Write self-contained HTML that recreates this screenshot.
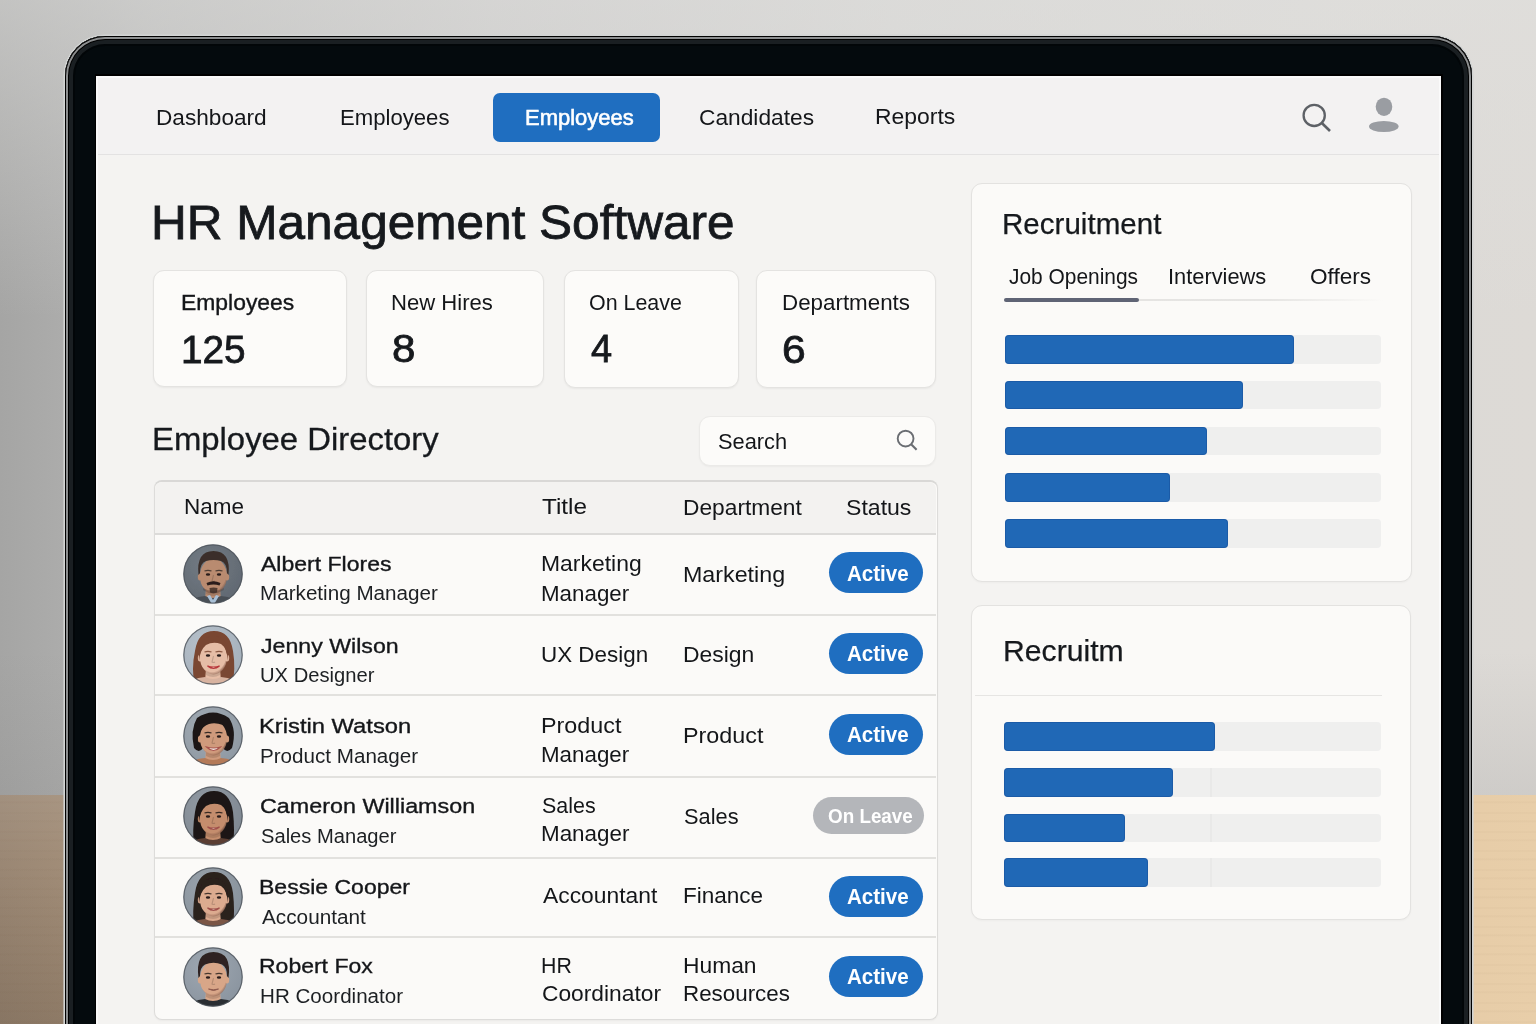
<!DOCTYPE html>
<html><head><meta charset="utf-8">
<style>
*{box-sizing:border-box;margin:0;padding:0}
html,body{width:1536px;height:1024px;overflow:hidden;background:#d0d0ce}
body{position:relative;font-family:"Liberation Sans",sans-serif;color:#1a1d21}
.r{position:absolute}
.t{position:absolute;white-space:nowrap}
.av{position:absolute;width:60px;height:60px;line-height:0}
</style></head>
<body>
<div class="r" style="left:0.0px;top:0.0px;width:1536.0px;height:795.0px;background:linear-gradient(90deg,#a5a5a4 0%,#b6b6b5 10%,#c9c8c7 32%,#d5d4d2 58%,#dbd9d6 85%,#dddad6 100%)"></div>
<div class="r" style="left:0.0px;top:0.0px;width:1536.0px;height:795.0px;background:linear-gradient(180deg,rgba(225,225,223,.5) 0%,rgba(210,210,210,0) 40%,rgba(150,150,150,0) 82%,rgba(110,110,110,.13) 100%)"></div>
<div class="r" style="left:0.0px;top:795.0px;width:1536.0px;height:229.0px;background:linear-gradient(90deg,#9a8774 0%,#a48f79 6%,#bea78b 25%,#d6bd99 55%,#e4c9a5 85%,#e8cea9 100%)"></div>
<div class="r" style="left:0.0px;top:795.0px;width:66.0px;height:229.0px;background:linear-gradient(180deg,rgba(255,255,255,.08) 0%,rgba(0,0,0,0) 30%,rgba(40,25,10,.16) 100%)"></div>
<div class="r" style="left:0;top:795px;width:1536px;height:229px;background:repeating-linear-gradient(180deg,rgba(255,255,255,0) 0px,rgba(255,255,255,0) 6px,rgba(90,60,30,.035) 7px,rgba(255,255,255,0) 9px,rgba(255,255,255,0) 17px,rgba(90,60,30,.045) 18px,rgba(255,255,255,0) 19px)"></div>
<div class="r" style="left:65.0px;top:35.5px;width:1406.5px;height:1088.5px;border-radius:40px;background:#040a0d;box-shadow:0 0 0 1.6px #d2d4d3, inset 0 0 0 1px #000, inset 0 0 0 3px #8c8e8f, inset 0 0 0 4px #000, inset 0 0 0 8px #1a1f22, inset 0 0 0 10px #020608"></div>
<div class="r" style="left:94.5px;top:74.0px;width:1348.0px;height:950.0px;background:#000"></div>
<div class="r" style="left:96.0px;top:75.5px;width:1345.0px;height:948.5px;background:#f4f3f1"></div>
<div class="r" style="left:98.0px;top:77.5px;width:1341.0px;height:77.3px;background:#f3f2f2;border-bottom:1.5px solid #e3e2e2"></div>
<div class="t" style="left:155.83px;top:106.93px;font-size:22.06px;line-height:22.06px;color:#141619;transform:scaleX(1.0262);transform-origin:0 0;">Dashboard</div>
<div class="t" style="left:339.67px;top:106.93px;font-size:22.06px;line-height:22.06px;color:#141619;transform:scaleX(1.0036);transform-origin:0 0;">Employees</div>
<div class="t" style="left:698.63px;top:106.83px;font-size:22.06px;line-height:22.06px;color:#141619;transform:scaleX(1.0311);transform-origin:0 0;">Candidates</div>
<div class="t" style="left:874.91px;top:106.48px;font-size:22.47px;line-height:22.47px;color:#141619;transform:scaleX(1.0207);transform-origin:0 0;">Reports</div>
<div class="r" style="left:493.0px;top:93.0px;width:167.0px;height:49.0px;background:#1f6ec0;border-radius:7px"></div>
<div class="t" style="left:524.83px;top:106.88px;font-size:22.47px;line-height:22.47px;color:#ffffff;transform:scaleX(0.9790);transform-origin:0 0;-webkit-text-stroke:0.6px #ffffff;">Employees</div>
<svg class="r" style="left:1290px;top:95px" width="50" height="45" viewBox="1290 95 50 45">
<circle cx="1314.2" cy="115.4" r="10.6" fill="none" stroke="#5d6166" stroke-width="2.3"/>
<line x1="1321.8" y1="123" x2="1330" y2="131" stroke="#5d6166" stroke-width="2.6" stroke-linecap="butt"/>
</svg>
<svg class="r" style="left:1360px;top:90px" width="50" height="50" viewBox="1360 90 50 50">
<ellipse cx="1384" cy="106.8" rx="8.3" ry="9.1" fill="#9a9da2"/>
<ellipse cx="1383.8" cy="126.5" rx="14.8" ry="5.6" fill="#9a9da2"/>
</svg>
<div class="t" style="left:151.13px;top:197.63px;font-size:48.64px;line-height:48.64px;color:#16191d;transform:scaleX(1.0184);transform-origin:0 0;-webkit-text-stroke:0.8px #16191d;">HR Management Software</div>
<div class="r" style="left:153.0px;top:269.6px;width:194.0px;height:117.0px;background:#fcfbf9;border:1.5px solid #e4e3e1;border-radius:11px;box-shadow:0 1px 2px rgba(0,0,0,.05)"></div>
<div class="r" style="left:365.6px;top:269.6px;width:178.4px;height:117.0px;background:#fcfbf9;border:1.5px solid #e4e3e1;border-radius:11px;box-shadow:0 1px 2px rgba(0,0,0,.05)"></div>
<div class="r" style="left:564.3px;top:270.0px;width:175.0px;height:118.0px;background:#fcfbf9;border:1.5px solid #e4e3e1;border-radius:11px;box-shadow:0 1px 2px rgba(0,0,0,.05)"></div>
<div class="r" style="left:756.0px;top:270.0px;width:180.0px;height:118.0px;background:#fcfbf9;border:1.5px solid #e4e3e1;border-radius:11px;box-shadow:0 1px 2px rgba(0,0,0,.05)"></div>
<div class="t" style="left:181.30px;top:292.36px;font-size:21.90px;line-height:21.90px;color:#141619;transform:scaleX(1.0460);transform-origin:0 0;-webkit-text-stroke:0.35px #141619;">Employees</div>
<div class="t" style="left:390.77px;top:293.24px;font-size:21.33px;line-height:21.33px;color:#141619;transform:scaleX(1.0359);transform-origin:0 0;">New Hires</div>
<div class="t" style="left:589.00px;top:293.24px;font-size:21.33px;line-height:21.33px;color:#141619;transform:scaleX(1.0039);transform-origin:0 0;">On Leave</div>
<div class="t" style="left:782.25px;top:292.72px;font-size:21.48px;line-height:21.48px;color:#141619;transform:scaleX(1.0415);transform-origin:0 0;">Departments</div>
<div class="t" style="left:181.28px;top:330.09px;font-size:39.11px;line-height:39.11px;color:#16191d;transform:scaleX(0.9898);transform-origin:0 0;-webkit-text-stroke:0.8px #16191d;">125</div>
<div class="t" style="left:391.88px;top:330.21px;font-size:38.97px;line-height:38.97px;color:#16191d;transform:scaleX(1.0808);transform-origin:0 0;-webkit-text-stroke:0.8px #16191d;">8</div>
<div class="t" style="left:590.61px;top:330.33px;font-size:38.83px;line-height:38.83px;color:#16191d;transform:scaleX(0.9790);transform-origin:0 0;-webkit-text-stroke:0.8px #16191d;">4</div>
<div class="t" style="left:782.20px;top:330.03px;font-size:39.54px;line-height:39.54px;color:#16191d;transform:scaleX(1.0791);transform-origin:0 0;-webkit-text-stroke:0.8px #16191d;">6</div>
<div class="t" style="left:151.51px;top:423.85px;font-size:31.72px;line-height:31.72px;color:#16191d;transform:scaleX(1.0361);transform-origin:0 0;-webkit-text-stroke:0.3px #16191d;">Employee Directory</div>
<div class="r" style="left:698.5px;top:415.5px;width:237.3px;height:50.1px;background:#fcfbf9;border:1.5px solid #ebeae8;border-radius:11px;box-shadow:0 1px 2px rgba(0,0,0,.04)"></div>
<div class="t" style="left:718.32px;top:430.76px;font-size:21.90px;line-height:21.90px;color:#141619;transform:scaleX(0.9973);transform-origin:0 0;">Search</div>
<svg class="r" style="left:890px;top:425px" width="35" height="35" viewBox="890 425 35 35">
<circle cx="905.6" cy="438.6" r="7.9" fill="none" stroke="#6a6d72" stroke-width="1.9"/>
<line x1="911.4" y1="444.4" x2="916.6" y2="449.8" stroke="#6a6d72" stroke-width="2.1"/>
</svg>
<div class="r" style="left:153.5px;top:479.5px;width:784.0px;height:540.0px;background:#fbfaf8;border:1.5px solid #dddcda;border-top:2px solid #d9d8d6;border-radius:8px;box-shadow:0 1px 2px rgba(0,0,0,.04)"></div>
<div class="r" style="left:155.0px;top:481.5px;width:781.0px;height:51.5px;background:#f3f2f0;border-radius:7px 7px 0 0"></div>
<div class="r" style="left:155.0px;top:533.0px;width:781.0px;height:2.0px;background:#dcdbd9"></div>
<div class="r" style="left:155.0px;top:614.0px;width:781.0px;height:2.0px;background:#e2e1de"></div>
<div class="r" style="left:155.0px;top:694.0px;width:781.0px;height:2.0px;background:#e2e1de"></div>
<div class="r" style="left:155.0px;top:776.0px;width:781.0px;height:2.0px;background:#e2e1de"></div>
<div class="r" style="left:155.0px;top:857.0px;width:781.0px;height:2.0px;background:#e2e1de"></div>
<div class="r" style="left:155.0px;top:936.0px;width:781.0px;height:2.0px;background:#e2e1de"></div>
<div class="t" style="left:184.24px;top:496.42px;font-size:22.54px;line-height:22.54px;color:#141619;transform:scaleX(0.9990);transform-origin:0 0;">Name</div>
<div class="t" style="left:541.92px;top:496.42px;font-size:22.54px;line-height:22.54px;color:#141619;transform:scaleX(1.0795);transform-origin:0 0;">Title</div>
<div class="t" style="left:683.02px;top:496.76px;font-size:21.90px;line-height:21.90px;color:#141619;transform:scaleX(1.0391);transform-origin:0 0;">Department</div>
<div class="t" style="left:845.98px;top:496.76px;font-size:21.90px;line-height:21.90px;color:#141619;transform:scaleX(1.0540);transform-origin:0 0;">Status</div>
<div class="av" style="left:182.5px;top:544.3px"><svg width="60" height="60" viewBox="0 0 60 60"><defs><clipPath id="c0"><circle cx="30" cy="30" r="29.6"/></clipPath><radialGradient id="bg0" cx="40%" cy="35%" r="70%"><stop offset="0" stop-color="#737b84"/><stop offset="1" stop-color="#5f6770"/></radialGradient><radialGradient id="f0" cx="45%" cy="40%" r="65%"><stop offset="0" stop-color="#b98b70"/><stop offset=".8" stop-color="#b98b70"/><stop offset="1" stop-color="#7a5040" stop-opacity=".6"/></radialGradient><filter id="b0"><feGaussianBlur stdDeviation="0.5"/></filter></defs><g clip-path="url(#c0)"><g filter="url(#b0)"><rect x="-2" y="-2" width="64" height="64" fill="url(#bg0)"/><path d="M23 44 L37 44 L38 56 L22 56Z" fill="#b98b70"/><path d="M23 46 Q30 52 37 46 L37 50 Q30 54 23 50Z" fill="#000" opacity=".12"/><path d="M2 64 Q6 53 22 52 Q30 56 38 52 Q54 53 58 64Z" fill="#4a4f56"/><path d="M24 52 L30 62 L36 52 L33 51 L30 56 L27 51Z" fill="#a9c0d6"/><ellipse cx="30.5" cy="32" rx="13.6" ry="17.5" fill="url(#f0)"/><ellipse cx="17" cy="33" rx="2.2" ry="3.6" fill="#b98b70"/><ellipse cx="44" cy="33" rx="2.2" ry="3.6" fill="#b98b70"/><path d="M15.5 31 Q13 7 30.5 7 Q48 7 45.5 31 L44 29 Q44 19 38 17 Q30.5 15 23 17 Q17 19 17 29Z" fill="#3b2f29"/><path d="M23.5 39 Q30.5 35.5 37.5 39 L36.5 41.5 Q30.5 39.5 24.5 41.5Z" fill="#2a1f1a"/><path d="M26.5 44 Q30.5 43 34.5 44 L34 48.5 Q30.5 50 27 48.5Z" fill="#3a2b24" opacity=".8"/><path d="M20 46 Q30 53 41 46 L41 44 Q30 50 20 44Z" fill="#3a2b24" opacity=".25"/><ellipse cx="25" cy="30.5" rx="2.2" ry="1.2" fill="#2a1f1b"/><ellipse cx="36" cy="30.5" rx="2.2" ry="1.2" fill="#2a1f1b"/><path d="M21.5 27 Q25 25.6 28.5 27 M32.5 27 Q36 25.6 39.5 27" stroke="#3b2f29" stroke-width="1.2" fill="none" opacity=".85"/><path d="M30.5 31 L29 37 Q30.5 38 32 37" stroke="#000" stroke-opacity=".16" stroke-width="1.1" fill="none"/></g></g><circle cx="30" cy="30" r="29.2" fill="none" stroke="#4e545b" stroke-width="1.2" stroke-opacity=".8"/></svg></div>
<div class="t" style="left:261.19px;top:553.90px;font-size:20.91px;line-height:20.91px;color:#141619;transform:scaleX(1.1007);transform-origin:0 0;-webkit-text-stroke:0.35px #141619;">Albert Flores</div>
<div class="t" style="left:259.89px;top:583.63px;font-size:19.34px;line-height:19.34px;color:#1d2023;transform:scaleX(1.0683);transform-origin:0 0;">Marketing Manager</div>
<div class="t" style="left:540.81px;top:553.38px;font-size:21.76px;line-height:21.76px;color:#141619;transform:scaleX(1.0538);transform-origin:0 0;">Marketing</div>
<div class="t" style="left:540.85px;top:582.68px;font-size:21.76px;line-height:21.76px;color:#141619;transform:scaleX(1.0276);transform-origin:0 0;">Manager</div>
<div class="t" style="left:682.58px;top:564.18px;font-size:21.76px;line-height:21.76px;color:#141619;transform:scaleX(1.0689);transform-origin:0 0;">Marketing</div>
<div class="r" style="left:829.2px;top:552.4px;width:94.0px;height:40.6px;background:#1f6ec0;border-radius:21px"></div>
<div class="t" style="left:846.58px;top:562.68px;font-size:22.47px;line-height:22.47px;color:#ffffff;transform:scaleX(0.9145);transform-origin:0 0;font-weight:700;">Active</div>
<div class="av" style="left:182.5px;top:625.0px"><svg width="60" height="60" viewBox="0 0 60 60"><defs><clipPath id="c1"><circle cx="30" cy="30" r="29.6"/></clipPath><radialGradient id="bg1" cx="40%" cy="35%" r="70%"><stop offset="0" stop-color="#b8c2cc"/><stop offset="1" stop-color="#a3aeb9"/></radialGradient><radialGradient id="f1" cx="45%" cy="40%" r="65%"><stop offset="0" stop-color="#e6bda6"/><stop offset=".8" stop-color="#e6bda6"/><stop offset="1" stop-color="#7a5040" stop-opacity=".6"/></radialGradient><filter id="b1"><feGaussianBlur stdDeviation="0.5"/></filter></defs><g clip-path="url(#c1)"><g filter="url(#b1)"><rect x="-2" y="-2" width="64" height="64" fill="url(#bg1)"/><path d="M12 62 Q8 44 12 26 Q15 6 31 6 Q47 6 50 26 Q53 44 49 62Z" fill="#7a4631"/><path d="M23 44 L37 44 L38 56 L22 56Z" fill="#e6bda6"/><path d="M23 46 Q30 52 37 46 L37 50 Q30 54 23 50Z" fill="#000" opacity=".12"/><path d="M2 64 Q6 53 22 52 Q30 56 38 52 Q54 53 58 64Z" fill="#d8b3a0"/><ellipse cx="30.5" cy="32" rx="13.6" ry="17.5" fill="url(#f1)"/><ellipse cx="17" cy="33" rx="2.2" ry="3.6" fill="#e6bda6"/><ellipse cx="44" cy="33" rx="2.2" ry="3.6" fill="#e6bda6"/><path d="M16 36 Q14 12 30.5 11 Q47 12 45 36 Q44 23 38 19 Q30 16 23 20 Q17 25 16 36Z" fill="#7a4631"/><path d="M24.5 41 Q30.5 46 36.5 41 Q30.5 43 24.5 41Z" fill="#f2e8e2" stroke="#b8383a" stroke-width="1.2"/><ellipse cx="25" cy="30.5" rx="2.2" ry="1.2" fill="#2a1f1b"/><ellipse cx="36" cy="30.5" rx="2.2" ry="1.2" fill="#2a1f1b"/><path d="M21.5 27 Q25 25.6 28.5 27 M32.5 27 Q36 25.6 39.5 27" stroke="#7a4631" stroke-width="1.2" fill="none" opacity=".85"/><path d="M30.5 31 L29 37 Q30.5 38 32 37" stroke="#000" stroke-opacity=".16" stroke-width="1.1" fill="none"/></g></g><circle cx="30" cy="30" r="29.2" fill="none" stroke="#4e545b" stroke-width="1.2" stroke-opacity=".8"/></svg></div>
<div class="t" style="left:260.83px;top:635.70px;font-size:20.91px;line-height:20.91px;color:#141619;transform:scaleX(1.1075);transform-origin:0 0;-webkit-text-stroke:0.35px #141619;">Jenny Wilson</div>
<div class="t" style="left:260.24px;top:666.33px;font-size:19.34px;line-height:19.34px;color:#1d2023;transform:scaleX(1.0439);transform-origin:0 0;">UX Designer</div>
<div class="t" style="left:541.20px;top:644.08px;font-size:21.76px;line-height:21.76px;color:#141619;transform:scaleX(1.0303);transform-origin:0 0;">UX Design</div>
<div class="t" style="left:682.61px;top:644.08px;font-size:21.76px;line-height:21.76px;color:#141619;transform:scaleX(1.0538);transform-origin:0 0;">Design</div>
<div class="r" style="left:829.2px;top:633.0px;width:94.0px;height:40.5px;background:#1f6ec0;border-radius:21px"></div>
<div class="t" style="left:846.58px;top:643.23px;font-size:22.47px;line-height:22.47px;color:#ffffff;transform:scaleX(0.9145);transform-origin:0 0;font-weight:700;">Active</div>
<div class="av" style="left:182.5px;top:706.0px"><svg width="60" height="60" viewBox="0 0 60 60"><defs><clipPath id="c2"><circle cx="30" cy="30" r="29.6"/></clipPath><radialGradient id="bg2" cx="40%" cy="35%" r="70%"><stop offset="0" stop-color="#a2abb4"/><stop offset="1" stop-color="#8d97a1"/></radialGradient><radialGradient id="f2" cx="45%" cy="40%" r="65%"><stop offset="0" stop-color="#cf9a7b"/><stop offset=".8" stop-color="#cf9a7b"/><stop offset="1" stop-color="#7a5040" stop-opacity=".6"/></radialGradient><filter id="b2"><feGaussianBlur stdDeviation="0.5"/></filter></defs><g clip-path="url(#c2)"><g filter="url(#b2)"><rect x="-2" y="-2" width="64" height="64" fill="url(#bg2)"/><path d="M11 42 Q7 24 14 12 Q30 1 46 12 Q54 24 49 42 Q44 48 40 42 L20 42 Q16 48 11 42Z" fill="#1b1716"/><path d="M23 44 L37 44 L38 56 L22 56Z" fill="#cf9a7b"/><path d="M23 46 Q30 52 37 46 L37 50 Q30 54 23 50Z" fill="#000" opacity=".12"/><path d="M2 64 Q6 53 22 52 Q30 56 38 52 Q54 53 58 64Z" fill="#b47a58"/><ellipse cx="30.5" cy="32" rx="13.6" ry="17.5" fill="url(#f2)"/><ellipse cx="17" cy="33" rx="2.2" ry="3.6" fill="#cf9a7b"/><ellipse cx="44" cy="33" rx="2.2" ry="3.6" fill="#cf9a7b"/><path d="M14 36 Q11 14 30.5 10 Q50 14 47 36 Q46 24 40 19 Q32 16 26 18 Q20 20 17 26 Q15 30 14 36Z" fill="#1b1716"/><path d="M23.5 41 Q30.5 48 37.5 41 Q30.5 43 23.5 41Z" fill="#f3ebe6" stroke="#a8524c" stroke-width="1.1"/><ellipse cx="25" cy="30.5" rx="2.2" ry="1.2" fill="#2a1f1b"/><ellipse cx="36" cy="30.5" rx="2.2" ry="1.2" fill="#2a1f1b"/><path d="M21.5 27 Q25 25.6 28.5 27 M32.5 27 Q36 25.6 39.5 27" stroke="#1b1716" stroke-width="1.2" fill="none" opacity=".85"/><path d="M30.5 31 L29 37 Q30.5 38 32 37" stroke="#000" stroke-opacity=".16" stroke-width="1.1" fill="none"/></g></g><circle cx="30" cy="30" r="29.2" fill="none" stroke="#4e545b" stroke-width="1.2" stroke-opacity=".8"/></svg></div>
<div class="t" style="left:259.33px;top:715.90px;font-size:20.91px;line-height:20.91px;color:#141619;transform:scaleX(1.1360);transform-origin:0 0;-webkit-text-stroke:0.35px #141619;">Kristin Watson</div>
<div class="t" style="left:259.89px;top:746.53px;font-size:19.34px;line-height:19.34px;color:#1d2023;transform:scaleX(1.0663);transform-origin:0 0;">Product Manager</div>
<div class="t" style="left:540.78px;top:715.18px;font-size:21.76px;line-height:21.76px;color:#141619;transform:scaleX(1.0727);transform-origin:0 0;">Product</div>
<div class="t" style="left:540.85px;top:744.48px;font-size:21.76px;line-height:21.76px;color:#141619;transform:scaleX(1.0276);transform-origin:0 0;">Manager</div>
<div class="t" style="left:682.58px;top:725.48px;font-size:21.76px;line-height:21.76px;color:#141619;transform:scaleX(1.0727);transform-origin:0 0;">Product</div>
<div class="r" style="left:829.2px;top:714.0px;width:94.0px;height:40.6px;background:#1f6ec0;border-radius:21px"></div>
<div class="t" style="left:846.58px;top:724.28px;font-size:22.47px;line-height:22.47px;color:#ffffff;transform:scaleX(0.9145);transform-origin:0 0;font-weight:700;">Active</div>
<div class="av" style="left:182.5px;top:786.2px"><svg width="60" height="60" viewBox="0 0 60 60"><defs><clipPath id="c3"><circle cx="30" cy="30" r="29.6"/></clipPath><radialGradient id="bg3" cx="40%" cy="35%" r="70%"><stop offset="0" stop-color="#939ba4"/><stop offset="1" stop-color="#7d8690"/></radialGradient><radialGradient id="f3" cx="45%" cy="40%" r="65%"><stop offset="0" stop-color="#c48d6d"/><stop offset=".8" stop-color="#c48d6d"/><stop offset="1" stop-color="#7a5040" stop-opacity=".6"/></radialGradient><filter id="b3"><feGaussianBlur stdDeviation="0.5"/></filter></defs><g clip-path="url(#c3)"><g filter="url(#b3)"><rect x="-2" y="-2" width="64" height="64" fill="url(#bg3)"/><path d="M11 62 Q9 44 12 26 Q15 5 31 5 Q47 5 50 26 Q52 44 50 62Z" fill="#1e1816"/><path d="M23 44 L37 44 L38 56 L22 56Z" fill="#c48d6d"/><path d="M23 46 Q30 52 37 46 L37 50 Q30 54 23 50Z" fill="#000" opacity=".12"/><path d="M2 64 Q6 53 22 52 Q30 56 38 52 Q54 53 58 64Z" fill="#5a3e33"/><ellipse cx="30.5" cy="32" rx="13.6" ry="17.5" fill="url(#f3)"/><ellipse cx="17" cy="33" rx="2.2" ry="3.6" fill="#c48d6d"/><ellipse cx="44" cy="33" rx="2.2" ry="3.6" fill="#c48d6d"/><path d="M16 36 Q14 12 30.5 11 Q47 12 45 36 Q44 23 38 19 Q30 16 23 20 Q17 25 16 36Z" fill="#1e1816"/><path d="M24.5 41 Q30.5 46 36.5 41 Q30.5 43 24.5 41Z" fill="#f2e8e2" stroke="#a0504a" stroke-width="1.2"/><ellipse cx="25" cy="30.5" rx="2.2" ry="1.2" fill="#2a1f1b"/><ellipse cx="36" cy="30.5" rx="2.2" ry="1.2" fill="#2a1f1b"/><path d="M21.5 27 Q25 25.6 28.5 27 M32.5 27 Q36 25.6 39.5 27" stroke="#1e1816" stroke-width="1.2" fill="none" opacity=".85"/><path d="M30.5 31 L29 37 Q30.5 38 32 37" stroke="#000" stroke-opacity=".16" stroke-width="1.1" fill="none"/></g></g><circle cx="30" cy="30" r="29.2" fill="none" stroke="#4e545b" stroke-width="1.2" stroke-opacity=".8"/></svg></div>
<div class="t" style="left:260.09px;top:796.20px;font-size:20.91px;line-height:20.91px;color:#141619;transform:scaleX(1.1155);transform-origin:0 0;-webkit-text-stroke:0.35px #141619;">Cameron Williamson</div>
<div class="t" style="left:260.87px;top:826.83px;font-size:19.34px;line-height:19.34px;color:#1d2023;transform:scaleX(1.0417);transform-origin:0 0;">Sales Manager</div>
<div class="t" style="left:541.93px;top:794.68px;font-size:21.76px;line-height:21.76px;color:#141619;transform:scaleX(0.9855);transform-origin:0 0;">Sales</div>
<div class="t" style="left:540.85px;top:823.48px;font-size:21.76px;line-height:21.76px;color:#141619;transform:scaleX(1.0300);transform-origin:0 0;">Manager</div>
<div class="t" style="left:683.72px;top:805.98px;font-size:21.76px;line-height:21.76px;color:#141619;transform:scaleX(1.0024);transform-origin:0 0;">Sales</div>
<div class="r" style="left:813.0px;top:796.5px;width:110.8px;height:37.3px;background:#b4b6ba;border-radius:19px"></div>
<div class="t" style="left:827.61px;top:805.57px;font-size:20.76px;line-height:20.76px;color:#ffffff;transform:scaleX(0.9078);transform-origin:0 0;font-weight:700;">On Leave</div>
<div class="av" style="left:182.5px;top:866.8px"><svg width="60" height="60" viewBox="0 0 60 60"><defs><clipPath id="c4"><circle cx="30" cy="30" r="29.6"/></clipPath><radialGradient id="bg4" cx="40%" cy="35%" r="70%"><stop offset="0" stop-color="#9aa3ac"/><stop offset="1" stop-color="#86909a"/></radialGradient><radialGradient id="f4" cx="45%" cy="40%" r="65%"><stop offset="0" stop-color="#dcab8f"/><stop offset=".8" stop-color="#dcab8f"/><stop offset="1" stop-color="#7a5040" stop-opacity=".6"/></radialGradient><filter id="b4"><feGaussianBlur stdDeviation="0.5"/></filter></defs><g clip-path="url(#c4)"><g filter="url(#b4)"><rect x="-2" y="-2" width="64" height="64" fill="url(#bg4)"/><path d="M11 62 Q9 44 12 26 Q15 5 31 5 Q47 5 50 26 Q52 44 50 62Z" fill="#2a201c"/><path d="M23 44 L37 44 L38 56 L22 56Z" fill="#dcab8f"/><path d="M23 46 Q30 52 37 46 L37 50 Q30 54 23 50Z" fill="#000" opacity=".12"/><path d="M2 64 Q6 53 22 52 Q30 56 38 52 Q54 53 58 64Z" fill="#7a5444"/><ellipse cx="30.5" cy="32" rx="13.6" ry="17.5" fill="url(#f4)"/><ellipse cx="17" cy="33" rx="2.2" ry="3.6" fill="#dcab8f"/><ellipse cx="44" cy="33" rx="2.2" ry="3.6" fill="#dcab8f"/><path d="M16 36 Q14 12 30.5 11 Q47 12 45 36 Q44 23 38 19 Q30 16 23 20 Q17 25 16 36Z" fill="#2a201c"/><path d="M24.5 41 Q30.5 46 36.5 41 Q30.5 43 24.5 41Z" fill="#f2e8e2" stroke="#a0504a" stroke-width="1.2"/><ellipse cx="25" cy="30.5" rx="2.2" ry="1.2" fill="#2a1f1b"/><ellipse cx="36" cy="30.5" rx="2.2" ry="1.2" fill="#2a1f1b"/><path d="M21.5 27 Q25 25.6 28.5 27 M32.5 27 Q36 25.6 39.5 27" stroke="#2a201c" stroke-width="1.2" fill="none" opacity=".85"/><path d="M30.5 31 L29 37 Q30.5 38 32 37" stroke="#000" stroke-opacity=".16" stroke-width="1.1" fill="none"/></g></g><circle cx="30" cy="30" r="29.2" fill="none" stroke="#4e545b" stroke-width="1.2" stroke-opacity=".8"/></svg></div>
<div class="t" style="left:259.39px;top:876.50px;font-size:20.91px;line-height:20.91px;color:#141619;transform:scaleX(1.1007);transform-origin:0 0;-webkit-text-stroke:0.35px #141619;">Bessie Cooper</div>
<div class="t" style="left:261.50px;top:907.53px;font-size:19.34px;line-height:19.34px;color:#1d2023;transform:scaleX(1.0739);transform-origin:0 0;">Accountant</div>
<div class="t" style="left:542.60px;top:885.18px;font-size:21.76px;line-height:21.76px;color:#141619;transform:scaleX(1.0500);transform-origin:0 0;">Accountant</div>
<div class="t" style="left:682.64px;top:885.18px;font-size:21.76px;line-height:21.76px;color:#141619;transform:scaleX(1.0357);transform-origin:0 0;">Finance</div>
<div class="r" style="left:829.2px;top:876.0px;width:94.0px;height:40.8px;background:#1f6ec0;border-radius:21px"></div>
<div class="t" style="left:846.58px;top:886.38px;font-size:22.47px;line-height:22.47px;color:#ffffff;transform:scaleX(0.9145);transform-origin:0 0;font-weight:700;">Active</div>
<div class="av" style="left:182.5px;top:947.1px"><svg width="60" height="60" viewBox="0 0 60 60"><defs><clipPath id="c5"><circle cx="30" cy="30" r="29.6"/></clipPath><radialGradient id="bg5" cx="40%" cy="35%" r="70%"><stop offset="0" stop-color="#9ea7b1"/><stop offset="1" stop-color="#89939e"/></radialGradient><radialGradient id="f5" cx="45%" cy="40%" r="65%"><stop offset="0" stop-color="#d8a688"/><stop offset=".8" stop-color="#d8a688"/><stop offset="1" stop-color="#7a5040" stop-opacity=".6"/></radialGradient><filter id="b5"><feGaussianBlur stdDeviation="0.5"/></filter></defs><g clip-path="url(#c5)"><g filter="url(#b5)"><rect x="-2" y="-2" width="64" height="64" fill="url(#bg5)"/><path d="M23 44 L37 44 L38 56 L22 56Z" fill="#d8a688"/><path d="M23 46 Q30 52 37 46 L37 50 Q30 54 23 50Z" fill="#000" opacity=".12"/><path d="M2 64 Q6 53 22 52 Q30 56 38 52 Q54 53 58 64Z" fill="#2a2e33"/><ellipse cx="30.5" cy="32" rx="13.6" ry="17.5" fill="url(#f5)"/><ellipse cx="17" cy="33" rx="2.2" ry="3.6" fill="#d8a688"/><ellipse cx="44" cy="33" rx="2.2" ry="3.6" fill="#d8a688"/><path d="M15.5 31 Q12 5 30.5 5 Q49 5 45.5 31 L44 29 Q44 20 39 17.5 Q30.5 14 22 17.5 Q17 20 17 29Z" fill="#2e2420"/><path d="M25.5 42 Q30.5 45 35.5 42 Q30.5 43.5 25.5 42Z" fill="#8c5a4e" stroke="#8c5a4e" stroke-width=".9"/><ellipse cx="25" cy="30.5" rx="2.2" ry="1.2" fill="#2a1f1b"/><ellipse cx="36" cy="30.5" rx="2.2" ry="1.2" fill="#2a1f1b"/><path d="M21.5 27 Q25 25.6 28.5 27 M32.5 27 Q36 25.6 39.5 27" stroke="#2e2420" stroke-width="1.2" fill="none" opacity=".85"/><path d="M30.5 31 L29 37 Q30.5 38 32 37" stroke="#000" stroke-opacity=".16" stroke-width="1.1" fill="none"/></g></g><circle cx="30" cy="30" r="29.2" fill="none" stroke="#4e545b" stroke-width="1.2" stroke-opacity=".8"/></svg></div>
<div class="t" style="left:259.39px;top:955.70px;font-size:20.91px;line-height:20.91px;color:#141619;transform:scaleX(1.0997);transform-origin:0 0;-webkit-text-stroke:0.35px #141619;">Robert Fox</div>
<div class="t" style="left:259.89px;top:987.23px;font-size:19.34px;line-height:19.34px;color:#1d2023;transform:scaleX(1.0658);transform-origin:0 0;">HR Coordinator</div>
<div class="t" style="left:540.93px;top:954.68px;font-size:21.76px;line-height:21.76px;color:#141619;transform:scaleX(0.9802);transform-origin:0 0;">HR</div>
<div class="t" style="left:541.53px;top:982.98px;font-size:21.76px;line-height:21.76px;color:#141619;transform:scaleX(1.0473);transform-origin:0 0;">Coordinator</div>
<div class="t" style="left:682.62px;top:954.68px;font-size:21.76px;line-height:21.76px;color:#141619;transform:scaleX(1.0487);transform-origin:0 0;">Human</div>
<div class="t" style="left:682.65px;top:982.98px;font-size:21.76px;line-height:21.76px;color:#141619;transform:scaleX(1.0283);transform-origin:0 0;">Resources</div>
<div class="r" style="left:829.2px;top:956.0px;width:94.0px;height:40.8px;background:#1f6ec0;border-radius:21px"></div>
<div class="t" style="left:846.58px;top:966.38px;font-size:22.47px;line-height:22.47px;color:#ffffff;transform:scaleX(0.9145);transform-origin:0 0;font-weight:700;">Active</div>
<div class="r" style="left:970.5px;top:182.6px;width:441.1px;height:399.0px;background:#fbfaf8;border:1.5px solid #e3e2e0;border-radius:11px;box-shadow:0 1px 2px rgba(0,0,0,.03)"></div>
<div class="t" style="left:1002.05px;top:210.20px;font-size:28.59px;line-height:28.59px;color:#16191d;transform:scaleX(1.0343);transform-origin:0 0;-webkit-text-stroke:0.25px #16191d;">Recruitment</div>
<div class="t" style="left:1008.57px;top:265.86px;font-size:21.19px;line-height:21.19px;color:#141619;transform:scaleX(0.9871);transform-origin:0 0;">Job Openings</div>
<div class="t" style="left:1167.89px;top:265.86px;font-size:21.19px;line-height:21.19px;color:#141619;transform:scaleX(1.0304);transform-origin:0 0;">Interviews</div>
<div class="t" style="left:1309.94px;top:265.86px;font-size:21.19px;line-height:21.19px;color:#141619;transform:scaleX(1.0654);transform-origin:0 0;">Offers</div>
<div class="r" style="left:1003.6px;top:299.4px;width:380.4px;height:1.6px;background:linear-gradient(90deg,#e4e3e1 0%,#e6e5e3 70%,rgba(230,229,227,0) 100%)"></div>
<div class="r" style="left:1003.6px;top:298.2px;width:135.4px;height:3.6px;background:#5f6475;border-radius:2px"></div>
<div class="r" style="left:1004.5px;top:335.0px;width:376.1px;height:28.8px;background:#efefee;border-radius:4px"></div>
<div class="r" style="left:1004.5px;top:335.0px;width:289.1px;height:28.8px;background:#2068b6;border-radius:4px;box-shadow:inset 0 0 0 1px rgba(20,70,140,.35)"></div>
<div class="r" style="left:1004.5px;top:380.7px;width:376.1px;height:28.8px;background:#efefee;border-radius:4px"></div>
<div class="r" style="left:1004.5px;top:380.7px;width:238.8px;height:28.8px;background:#2068b6;border-radius:4px;box-shadow:inset 0 0 0 1px rgba(20,70,140,.35)"></div>
<div class="r" style="left:1004.5px;top:426.6px;width:376.1px;height:28.8px;background:#efefee;border-radius:4px"></div>
<div class="r" style="left:1004.5px;top:426.6px;width:202.2px;height:28.8px;background:#2068b6;border-radius:4px;box-shadow:inset 0 0 0 1px rgba(20,70,140,.35)"></div>
<div class="r" style="left:1004.5px;top:473.0px;width:376.1px;height:28.8px;background:#efefee;border-radius:4px"></div>
<div class="r" style="left:1004.5px;top:473.0px;width:165.0px;height:28.8px;background:#2068b6;border-radius:4px;box-shadow:inset 0 0 0 1px rgba(20,70,140,.35)"></div>
<div class="r" style="left:1004.5px;top:519.0px;width:376.1px;height:28.8px;background:#efefee;border-radius:4px"></div>
<div class="r" style="left:1004.5px;top:519.0px;width:223.5px;height:28.8px;background:#2068b6;border-radius:4px;box-shadow:inset 0 0 0 1px rgba(20,70,140,.35)"></div>
<div class="r" style="left:970.5px;top:605.0px;width:440.2px;height:314.5px;background:#fbfaf8;border:1.5px solid #e3e2e0;border-radius:11px;box-shadow:0 1px 2px rgba(0,0,0,.03)"></div>
<div class="t" style="left:1002.51px;top:636.44px;font-size:29.72px;line-height:29.72px;color:#16191d;transform:scaleX(1.0150);transform-origin:0 0;-webkit-text-stroke:0.25px #16191d;">Recruitm</div>
<div class="r" style="left:975.0px;top:694.9px;width:406.8px;height:1.4px;background:#e6e5e3"></div>
<div class="r" style="left:1003.8px;top:722.2px;width:377.2px;height:28.5px;background:#efefee;border-radius:4px"></div>
<div class="r" style="left:1210.0px;top:722.2px;width:1.5px;height:28.5px;background:#e9e9e8"></div>
<div class="r" style="left:1003.8px;top:722.2px;width:211.2px;height:28.5px;background:#2068b6;border-radius:4px;box-shadow:inset 0 0 0 1px rgba(20,70,140,.35)"></div>
<div class="r" style="left:1003.8px;top:768.3px;width:377.2px;height:28.5px;background:#efefee;border-radius:4px"></div>
<div class="r" style="left:1210.0px;top:768.3px;width:1.5px;height:28.5px;background:#e9e9e8"></div>
<div class="r" style="left:1003.8px;top:768.3px;width:169.4px;height:28.5px;background:#2068b6;border-radius:4px;box-shadow:inset 0 0 0 1px rgba(20,70,140,.35)"></div>
<div class="r" style="left:1003.8px;top:813.5px;width:377.2px;height:28.5px;background:#efefee;border-radius:4px"></div>
<div class="r" style="left:1210.0px;top:813.5px;width:1.5px;height:28.5px;background:#e9e9e8"></div>
<div class="r" style="left:1003.8px;top:813.5px;width:121.6px;height:28.5px;background:#2068b6;border-radius:4px;box-shadow:inset 0 0 0 1px rgba(20,70,140,.35)"></div>
<div class="r" style="left:1003.8px;top:858.3px;width:377.2px;height:28.5px;background:#efefee;border-radius:4px"></div>
<div class="r" style="left:1210.0px;top:858.3px;width:1.5px;height:28.5px;background:#e9e9e8"></div>
<div class="r" style="left:1003.8px;top:858.3px;width:144.2px;height:28.5px;background:#2068b6;border-radius:4px;box-shadow:inset 0 0 0 1px rgba(20,70,140,.35)"></div>
<div class="r" style="left:96.0px;top:75.5px;width:1345.0px;height:954.5px;border:2px solid #fafafa;border-bottom:none"></div>
</body></html>
